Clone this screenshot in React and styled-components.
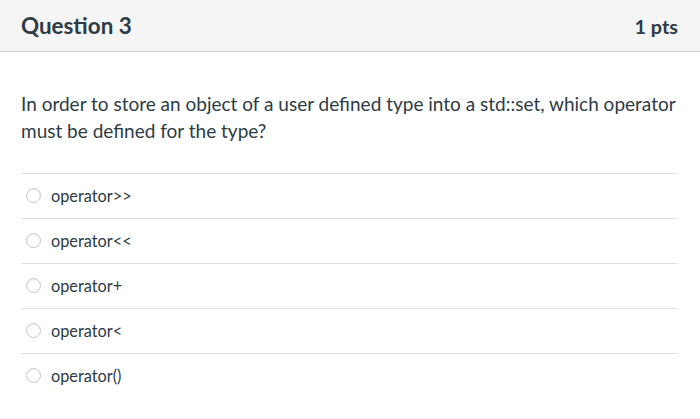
import React from "react";
import styled, { createGlobalStyle } from "styled-components";

const Global = createGlobalStyle`
  html, body { margin: 0; padding: 0; background: #fff; }
  body { font-family: Lato, "Open Sans", sans-serif; color: #2d3b45; }
`;

const Card = styled.div`
  width: 700px;
`;

const Header = styled.div`
  height: 51px;
  background: #f5f5f5;
  border-bottom: 1px solid #c7cdd1;
  display: flex;
  align-items: center;
  justify-content: space-between;
  padding: 0 22px 0 21px;
  box-sizing: content-box;
  width: 657px;
`;

const Title = styled.h2`
  margin: 0 0 1px;
  font-size: 22.4px;
  font-weight: 700;
  color: #2d3b45;
`;

const Points = styled.div`
  font-size: 19.8px;
  font-weight: 700;
  color: #2d3b45;
`;

const Body = styled.div`
  padding: 38px 22px 0 21px;
`;

const QuestionText = styled.p`
  margin: 0 0 29px;
  font-size: 19px;
  line-height: 27px;
  color: #2d3b45;
`;

const Answers = styled.div`
  display: flex;
  flex-direction: column;
`;

const Answer = styled.label`
  display: flex;
  align-items: center;
  gap: 10px;
  height: 44px;
  border-top: 1px solid #dfe1e3;
  padding-left: 5px;
  padding-bottom: 1px;
  box-sizing: border-box;
  height: 45px;
  font-size: 16.3px;
  color: #2d3b45;
`;

const Radio = styled.span`
  width: 13px;
  height: 13px;
  border-radius: 50%;
  border: 1px solid #c8c8c8;
  background: #fff;
  box-shadow: inset 0 1px 2px rgba(0,0,0,0.08);
  flex: none;
`;

const options = ["operator>>", "operator<<", "operator+", "operator<", "operator()"];

export default function App() {
  return (
    <Card>
      <Global />
      <Header>
        <Title>Question 3</Title>
        <Points>1 pts</Points>
      </Header>
      <Body>
        <QuestionText>
          In order to store an object of a user defined type into a std::set, which operator must be defined for the type?
        </QuestionText>
        <Answers>
          {options.map((o) => (
            <Answer key={o}>
              <Radio />
              {o}
            </Answer>
          ))}
        </Answers>
      </Body>
    </Card>
  );
}
